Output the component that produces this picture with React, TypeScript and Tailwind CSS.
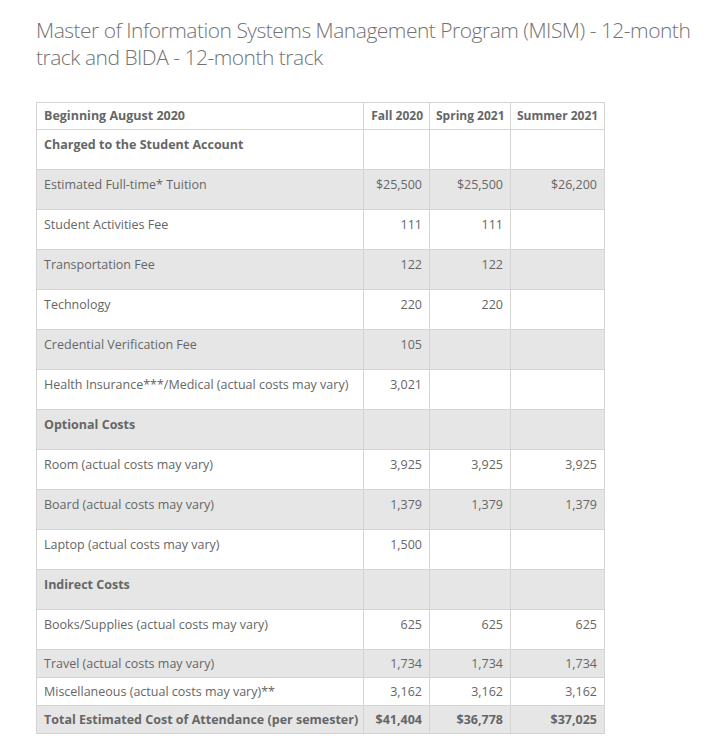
import React from 'react';

type Row = {
  label: string;
  values: string[];
  kind?: 'section' | 'total';
  shade?: boolean;
  short?: boolean;
};

const ROWS: Row[] = [
  { label: 'Charged to the Student Account', values: ['', '', ''], kind: 'section' },
  { label: 'Estimated Full-time* Tuition', values: ['$25,500', '$25,500', '$26,200'], shade: true },
  { label: 'Student Activities Fee', values: ['111', '111', ''] },
  { label: 'Transportation Fee', values: ['122', '122', ''], shade: true },
  { label: 'Technology', values: ['220', '220', ''] },
  { label: 'Credential Verification Fee', values: ['105', '', ''], shade: true },
  { label: 'Health Insurance***/Medical (actual costs may vary)', values: ['3,021', '', ''] },
  { label: 'Optional Costs', values: ['', '', ''], kind: 'section', shade: true },
  { label: 'Room (actual costs may vary)', values: ['3,925', '3,925', '3,925'] },
  { label: 'Board (actual costs may vary)', values: ['1,379', '1,379', '1,379'], shade: true },
  { label: 'Laptop (actual costs may vary)', values: ['1,500', '', ''] },
  { label: 'Indirect Costs', values: ['', '', ''], kind: 'section', shade: true },
  { label: 'Books/Supplies (actual costs may vary)', values: ['625', '625', '625'] },
  { label: 'Travel (actual costs may vary)', values: ['1,734', '1,734', '1,734'], shade: true, short: true },
  { label: 'Miscellaneous (actual costs may vary)**', values: ['3,162', '3,162', '3,162'], short: true },
  { label: 'Total Estimated Cost of Attendance (per semester)', values: ['$41,404', '$36,778', '$37,025'], kind: 'total', shade: true, short: true },
];

export default function App() {
  return (
    <div className="min-h-[745px] bg-white pl-[36px] pt-[17px] font-['Open_Sans',sans-serif] text-[#666]">
      <h1 className="w-[670px] text-[21px] font-light leading-[27px] tracking-[-0.5px] text-[#737373]">
        Master of Information Systems Management Program (MISM) - 12-month track and BIDA - 12-month track
      </h1>

      <table className="mt-[31px] w-[568px] table-fixed border-collapse border border-[#d4d4d4] text-[12.5px] leading-[20px]">
        <colgroup>
          <col className="w-[327px]" />
          <col className="w-[66px]" />
          <col className="w-[81px]" />
          <col className="w-[94px]" />
        </colgroup>
        <thead>
          <tr className="h-[27px]">
            <th className="border border-[#d4d4d4] px-[7px] py-[3px] text-left font-bold">Beginning August 2020</th>
            <th className="border border-[#d4d4d4] px-[6px] py-[3px] text-right text-[12px] font-bold whitespace-nowrap">Fall 2020</th>
            <th className="border border-[#d4d4d4] px-[6px] py-[3px] text-right text-[12px] font-bold whitespace-nowrap">Spring 2021</th>
            <th className="border border-[#d4d4d4] px-[6px] py-[3px] text-right text-[12px] font-bold whitespace-nowrap">Summer 2021</th>
          </tr>
        </thead>
        <tbody>
          {ROWS.map((row, i) => {
            const bold = row.kind === 'section' || row.kind === 'total';
            return (
              <tr
                key={i}
                className={`${row.short ? 'h-[28px]' : 'h-[40px]'} ${row.shade ? 'bg-[#e6e6e6]' : 'bg-white'}`}
              >
                <td
                  className={`border border-[#d4d4d4] px-[7px] ${row.short ? 'pt-[4px]' : 'pt-[5px]'} align-top whitespace-nowrap ${
                    bold ? 'font-bold' : ''
                  }`}
                >
                  {row.label}
                </td>
                {row.values.map((v, j) => (
                  <td
                    key={j}
                    className={`border border-[#d4d4d4] px-[7px] ${row.short ? 'pt-[4px]' : 'pt-[5px]'} text-right align-top ${
                      row.kind === 'total' ? 'font-bold' : ''
                    }`}
                  >
                    {v}
                  </td>
                ))}
              </tr>
            );
          })}
        </tbody>
      </table>
    </div>
  );
}
